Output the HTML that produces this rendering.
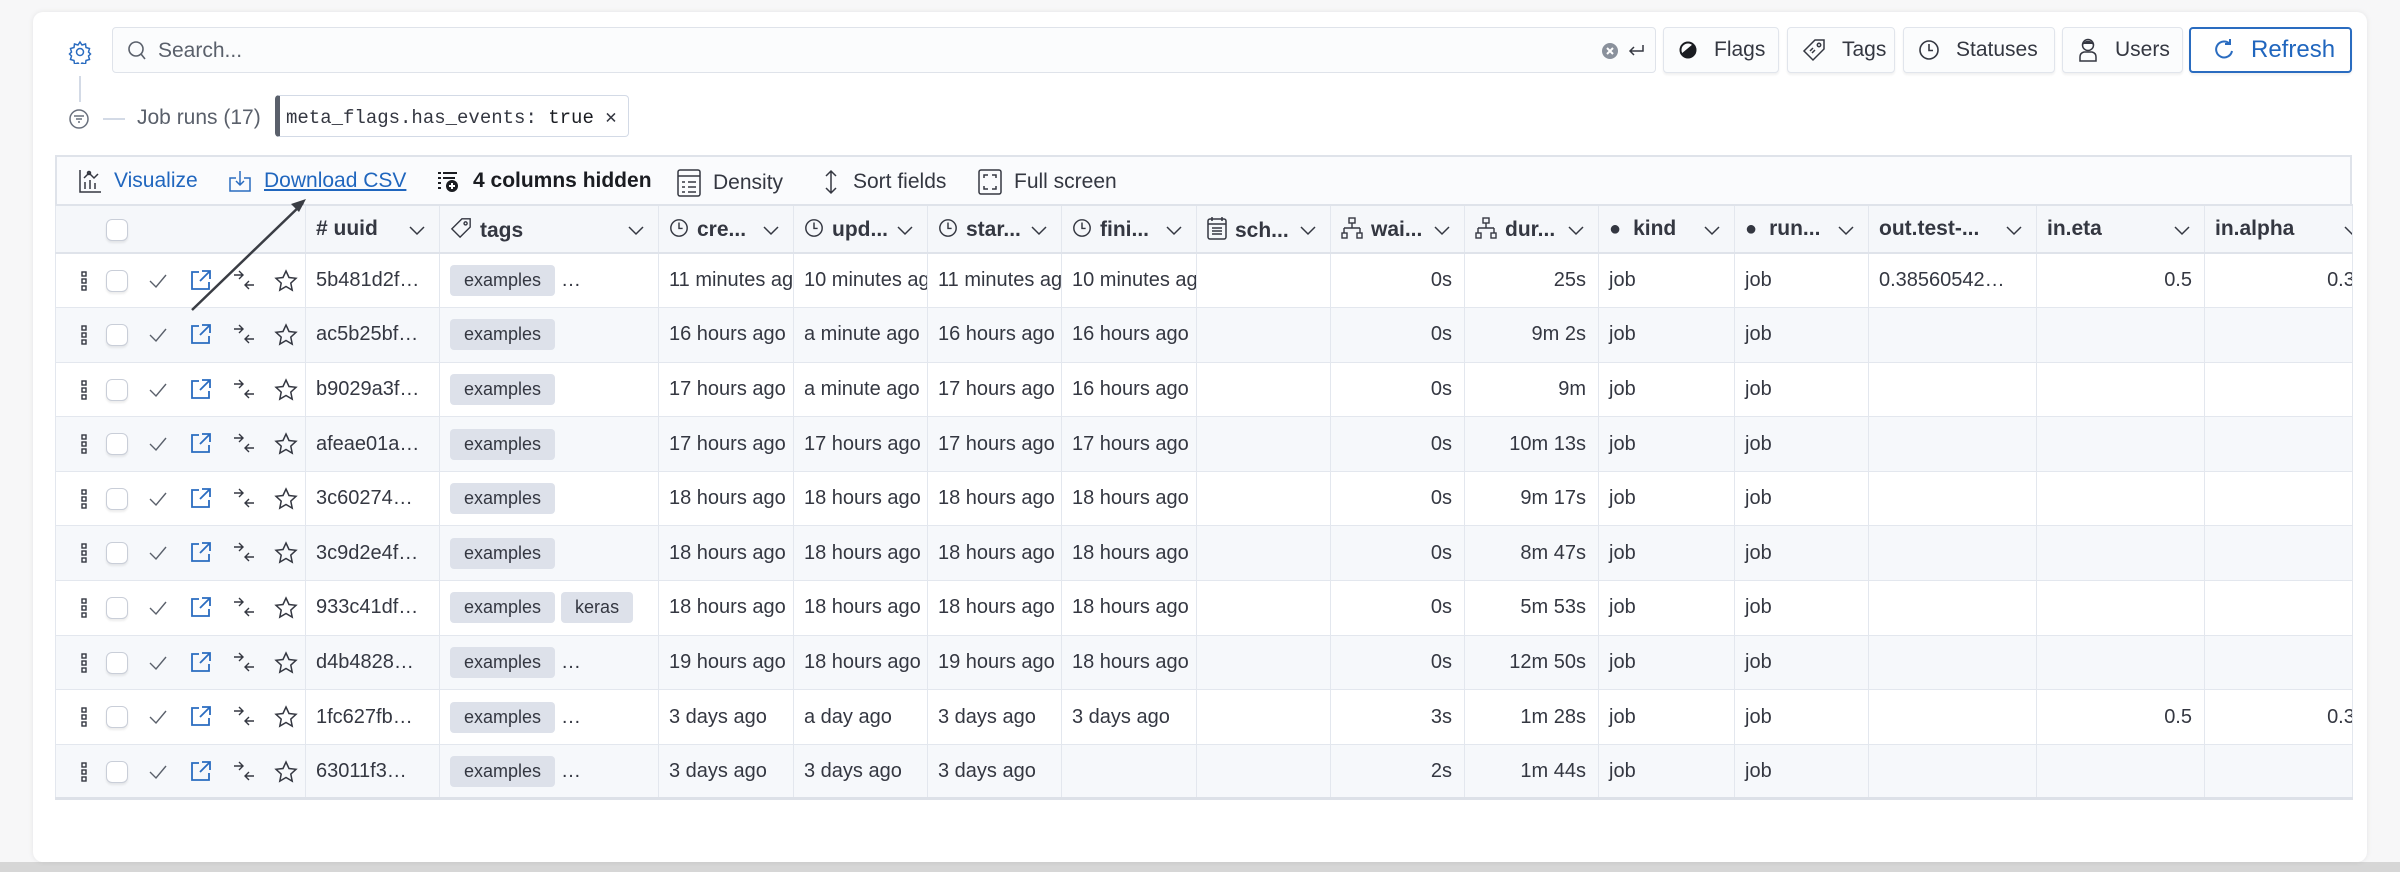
<!DOCTYPE html>
<html><head><meta charset="utf-8"><style>
*{box-sizing:border-box;margin:0;padding:0}
body{width:2400px;height:872px;background:#f7f7f8;font-family:"Liberation Sans",sans-serif;color:#343741;position:relative;overflow:hidden}
.bottom{position:absolute;left:0;top:862px;width:2400px;height:10px;background:#d6d6d6}
.card{position:absolute;left:33px;top:12px;width:2334px;height:850px;background:#fff;border-radius:10px;box-shadow:0 0 6px rgba(0,0,0,.08)}
.abs{position:absolute}
.search{left:112px;top:27px;width:1544px;height:46px;border:1px solid #dfe3ea;border-radius:4px;background:#fbfcfd}
.search span{position:absolute;left:45px;top:11px;font-size:21px;color:#5a606b}
.btn{top:27px;height:46px;border:1px solid #e1e5ec;border-radius:4px;background:#fbfcfd;box-shadow:0 2px 2px rgba(0,0,0,.06);font-size:21px;color:#343741;display:flex;align-items:center;padding-left:14px;gap:16px}
.refresh{border:2px solid #2a6cc0;color:#2066be;background:#fff;font-size:24px}
.chip{left:275px;top:95px;width:354px;height:42px;border:1px solid #d3dae6;border-left:5px solid #5a606b;border-radius:4px;font-family:"Liberation Mono",monospace;font-size:19px;padding:10px 0 0 6px;color:#343741}
.tool{left:55px;top:155px;width:2297px;height:49px;border:2px solid #dfe3ea;border-bottom:none;background:#fafbfd;font-size:21px}
.tool div{position:absolute;top:12px;display:flex;align-items:center;gap:12px}
table{position:absolute;left:55px;top:204px;border-collapse:collapse;table-layout:fixed;width:2297px;font-size:20px}
td,th{border:1px solid #e3e7ee;height:54.6px;overflow:hidden;white-space:nowrap;padding:0 10px;text-align:left}
th{height:48px;background:#f5f7fa;font-weight:bold;font-size:21px;border-top:2px solid #dfe3ea;border-bottom:2px solid #dfe3ea;position:relative}
th .c{position:absolute;right:14px;top:20px}
th .hi{display:inline-block;vertical-align:-3px;margin-right:8px}
tr:nth-child(even) td{background:#f6f8fb}
tbody tr:last-child td{border-bottom:3px solid #dde1e8}
td.r{text-align:right;padding-right:12px}
td.e{text-overflow:ellipsis}
td.a{position:relative;padding:0}
.pill{display:inline-block;background:#dde1ea;border-radius:4px;padding:5px 14px;font-size:18px;margin-right:6px}
.cb{position:absolute;left:50px;top:16px;width:22px;height:22px;border:1px solid #c9ced8;border-radius:6px;background:#fff;box-shadow:0 2px 2px rgba(0,0,0,.08)}
</style></head><body>
<div class="bottom"></div>
<div class="card"></div>

<svg class="abs" style="left:68px;top:40px" width="24" height="24" viewBox="0 0 24 24" fill="none" stroke="#2a6cc0" stroke-width="1.5"><circle cx="12" cy="12" r="3.5"/><path d="M12 2l2 3 3.5-1 .5 3.5 3.5 1-1 3.5 2 2-2 2 1 3.5-3.5 1-.5 3.5-3.5-1-2 3-2-3-3.5 1-.5-3.5-3.5-1 1-3.5-2-2 2-2-1-3.5 3.5-1L6.5 4 10 5z"/></svg>
<div class="abs" style="left:79px;top:76px;width:2px;height:26px;background:#d3dae6"></div>
<svg class="abs" style="left:68px;top:108px" width="22" height="22" viewBox="0 0 22 22" fill="none" stroke="#69707d" stroke-width="1.5"><circle cx="11" cy="11" r="9"/><path d="M6 8h10M8 11h6M10 14h2"/></svg>
<div class="abs" style="left:103px;top:118px;width:22px;height:2px;background:#d3dae6"></div>
<div class="abs" style="left:137px;top:106px;font-size:21px;color:#5a606b">Job runs (17)</div>
<div class="abs chip">meta_flags.has_events: <b style="font-weight:normal;color:#1a1c21">true</b> ✕</div>

<div class="abs search"><svg class="abs" style="left:14px;top:12px" width="20" height="22" viewBox="0 0 20 22" fill="none" stroke="#5a606b" stroke-width="1.6"><circle cx="9" cy="9" r="7"/><path d="M14 14l4 5"/></svg><span>Search...</span>
<svg class="abs" style="left:1488px;top:14px" width="18" height="18" viewBox="0 0 18 18"><circle cx="9" cy="9" r="8" fill="#8a919c"/><path d="M6 6l6 6M12 6l-6 6" stroke="#fff" stroke-width="2"/></svg>
<svg class="abs" style="left:1514px;top:15px" width="18" height="16" viewBox="0 0 18 16" fill="none" stroke="#343741" stroke-width="1.5"><path d="M16 2v6H3M7 4L3 8l4 4"/></svg></div>

<div class="abs btn" style="left:1663px;width:116px"><svg width="20" height="20" viewBox="0 0 20 20"><circle cx="10" cy="10" r="7.5" fill="none" stroke="#1a1c21" stroke-width="2"/><path d="M3 14L15 4A7.5 7.5 0 0 1 10 17.5 7.5 7.5 0 0 1 3 14z" fill="#1a1c21"/></svg>Flags</div>
<div class="abs btn" style="left:1787px;width:108px"><svg width="24" height="24" viewBox="0 0 24 24" fill="none" stroke="#343741" stroke-width="1.5"><path d="M13 2h9v9L11 22 2 13z"/><circle cx="17" cy="7" r="1.7"/><path d="M8 13l3-3M10 15l3-3"/></svg>Tags</div>
<div class="abs btn" style="left:1903px;width:152px"><svg width="22" height="22" viewBox="0 0 22 22" fill="none" stroke="#343741" stroke-width="1.6"><circle cx="11" cy="11" r="9"/><path d="M11 5v6.5h4"/></svg>Statuses</div>
<div class="abs btn" style="left:2062px;width:121px"><svg width="22" height="26" viewBox="0 0 22 26" fill="none" stroke="#343741" stroke-width="1.5"><circle cx="11" cy="8" r="5.5"/><path d="M6 7q5-5 10 0" fill="#343741"/><path d="M3 24v-4q0-4 4-5h8q4 1 4 5v4z"/></svg>Users</div>
<div class="abs btn refresh" style="left:2189px;width:163px;padding-left:22px;gap:16px"><svg width="22" height="24" viewBox="0 0 22 24" fill="none" stroke="#2a6cc0" stroke-width="2"><path d="M17 6A8 8 0 1 0 19 13"/><path d="M17 1v5h-5"/></svg>Refresh</div>

<div class="abs tool">
<div style="left:21px;color:#2066be"><svg width="24" height="24" viewBox="0 0 24 24" fill="none" stroke="#343741" stroke-width="1.5"><path d="M2 1v22h21M7 20v-7M12 20v-9M17 20v-6"/><path d="M6 9l5-5 5 5 4-4"/><circle cx="11" cy="4" r="1.5"/></svg>Visualize</div>
<div style="left:171px;color:#2066be"><svg width="24" height="24" viewBox="0 0 24 24" fill="none" stroke="#2a6cc0" stroke-width="1.5"><path d="M8 9H2v13h20V9h-6M12 2v14M8 12l4 4 4-4"/></svg><span style="text-decoration:underline">Download CSV</span></div>
<div style="left:380px;font-weight:bold;color:#1a1c21"><svg width="24" height="24" viewBox="0 0 24 24" fill="#1a1c21"><rect x="1" y="3" width="3" height="2"/><rect x="6" y="3" width="14" height="2"/><rect x="1" y="8" width="3" height="2"/><rect x="6" y="8" width="12" height="2"/><rect x="1" y="13" width="3" height="2"/><rect x="1" y="18" width="3" height="2"/><circle cx="15" cy="17" r="6"/><path d="M15 14v6M12 17h6" stroke="#fff" stroke-width="2"/></svg>4 columns hidden</div>
<div style="left:620px"><svg width="24" height="28" viewBox="0 0 24 28" fill="none" stroke="#343741" stroke-width="1.5"><rect x="1" y="1" width="22" height="26" rx="2"/><path d="M1 7h22M5 13h3M11 13h8M5 18h3M11 18h8M5 23h3M11 23h8"/></svg>Density</div>
<div style="left:764px"><svg width="20" height="26" viewBox="0 0 20 26" fill="none" stroke="#343741" stroke-width="1.5"><path d="M10 2v22M5 7l5-5 5 5M5 19l5 5 5-5"/></svg>Sort fields</div>
<div style="left:921px"><svg width="24" height="26" viewBox="0 0 24 26" fill="none" stroke="#343741" stroke-width="1.5"><rect x="1" y="1" width="22" height="24" rx="2"/><path d="M6 9V6h4M18 9V6h-4M6 17v3h4M18 17v3h-4"/></svg>Full screen</div>
</div>

<table>
<colgroup><col style="width:250px"><col style="width:134px"><col style="width:219px"><col style="width:135px"><col style="width:134px"><col style="width:134px"><col style="width:135px"><col style="width:134px"><col style="width:134px"><col style="width:134px"><col style="width:136px"><col style="width:134px"><col style="width:168px"><col style="width:168px"><col style="width:148px"></colgroup>
<thead><tr id="hr">
<th style="padding:0"><div class="cb" style="top:13px"></div></th>
<th># uuid</th>
<th><svg class="hi" width="22" height="24" viewBox="0 0 24 24" fill="none" stroke="#343741" stroke-width="1.5"><path d="M13 2h9v9L11 22 2 13z"/><circle cx="17" cy="7" r="1.7"/></svg>tags</th>
<th><svg class="hi" width="20" height="22" viewBox="0 0 22 22" fill="none" stroke="#343741" stroke-width="1.6"><circle cx="11" cy="11" r="9"/><path d="M11 5v6.5h4"/></svg>cre...</th>
<th><svg class="hi" width="20" height="22" viewBox="0 0 22 22" fill="none" stroke="#343741" stroke-width="1.6"><circle cx="11" cy="11" r="9"/><path d="M11 5v6.5h4"/></svg>upd...</th>
<th><svg class="hi" width="20" height="22" viewBox="0 0 22 22" fill="none" stroke="#343741" stroke-width="1.6"><circle cx="11" cy="11" r="9"/><path d="M11 5v6.5h4"/></svg>star...</th>
<th><svg class="hi" width="20" height="22" viewBox="0 0 22 22" fill="none" stroke="#343741" stroke-width="1.6"><circle cx="11" cy="11" r="9"/><path d="M11 5v6.5h4"/></svg>fini...</th>
<th><svg class="hi" width="20" height="24" viewBox="0 0 20 24" fill="none" stroke="#343741" stroke-width="1.5"><rect x="1" y="3" width="18" height="20" rx="2"/><path d="M1 8h18M5 1v4M15 1v4M5 12h10M5 15h10M5 18h10"/></svg>sch...</th>
<th><svg class="hi" width="22" height="22" viewBox="0 0 22 22" fill="none" stroke="#343741" stroke-width="1.4"><rect x="8" y="1" width="6" height="5"/><rect x="1" y="16" width="5" height="5"/><rect x="16" y="16" width="5" height="5"/><path d="M11 6v5M3 11h16M3 11v5M19 11v5"/></svg>wai...</th>
<th><svg class="hi" width="22" height="22" viewBox="0 0 22 22" fill="none" stroke="#343741" stroke-width="1.4"><rect x="8" y="1" width="6" height="5"/><rect x="1" y="16" width="5" height="5"/><rect x="16" y="16" width="5" height="5"/><path d="M11 6v5M3 11h16M3 11v5M19 11v5"/></svg>dur...</th>
<th><span style="font-size:20px;margin-right:12px">●</span>kind</th>
<th><span style="font-size:20px;margin-right:12px">●</span>run...</th>
<th>out.test-...</th>
<th>in.eta</th>
<th>in.alpha</th>
</tr></thead>
<tbody id="tb"></tbody>
</table>

<svg class="abs" style="left:0;top:0" width="2400" height="872"><path d="M192 310L303 203" stroke="#3a3d44" stroke-width="2.5"/><path d="M306 199l-15 5 8 8z" fill="#3a3d44"/></svg>

<script>
var ch='<svg class="c" width="16" height="10" viewBox="0 0 16 10" fill="none" stroke="#343741" stroke-width="1.5"><path d="M1 1l7 7 7-7"/></svg>';
var ths=document.querySelectorAll('#hr th');
for(var j=1;j<ths.length;j++){ths[j].insertAdjacentHTML('beforeend',ch);}
ths[ths.length-1].lastChild.style.right='-8px';
var A='<td class="a"><svg style="position:absolute;left:25px;top:17px" width="6" height="20" viewBox="0 0 6 20" fill="none" stroke="#343741" stroke-width="1.4"><rect x="1" y="1" width="4" height="4"/><rect x="1" y="8" width="4" height="4"/><rect x="1" y="15" width="4" height="4"/></svg><div class="cb"></div><svg style="position:absolute;left:93px;top:19px" width="18" height="16" viewBox="0 0 18 16" fill="none" stroke="#5a606b" stroke-width="1.4"><path d="M1 8l6 6L17 2"/></svg><svg style="position:absolute;left:134px;top:15px" width="22" height="22" viewBox="0 0 22 22" fill="none" stroke="#2a6cc0" stroke-width="1.8"><path d="M9 3H2v17h17v-7M12 2h8v8M20 2L10 12"/></svg><svg style="position:absolute;left:176px;top:15px" width="24" height="24" viewBox="0 0 24 24" fill="none" stroke="#343741" stroke-width="1.4"><path d="M2 6h9M7 2l4 4-4 4M22 16h-9M17 12l-4 4 4 4"/></svg><svg style="position:absolute;left:218px;top:15px" width="24" height="24" viewBox="0 0 24 24" fill="none" stroke="#343741" stroke-width="1.5"><path d="M12 2l3 6.5 7 .8-5.2 4.8 1.4 7-6.2-3.6-6.2 3.6 1.4-7L2 9.3l7-.8z"/></svg></td>';
var R=[
['5b481d2f…','e…','11 minutes ago','10 minutes ago','11 minutes ago','10 minutes ago','','0s','25s','0.38560542…','0.5','0.35'],
['ac5b25bf…','e','16 hours ago','a minute ago','16 hours ago','16 hours ago','','0s','9m 2s','','',''],
['b9029a3f…','e','17 hours ago','a minute ago','17 hours ago','16 hours ago','','0s','9m','','',''],
['afeae01a…','e','17 hours ago','17 hours ago','17 hours ago','17 hours ago','','0s','10m 13s','','',''],
['3c60274…','e','18 hours ago','18 hours ago','18 hours ago','18 hours ago','','0s','9m 17s','','',''],
['3c9d2e4f…','e','18 hours ago','18 hours ago','18 hours ago','18 hours ago','','0s','8m 47s','','',''],
['933c41df…','k','18 hours ago','18 hours ago','18 hours ago','18 hours ago','','0s','5m 53s','','',''],
['d4b4828…','e…','19 hours ago','18 hours ago','19 hours ago','18 hours ago','','0s','12m 50s','','',''],
['1fc627fb…','e…','3 days ago','a day ago','3 days ago','3 days ago','','3s','1m 28s','','0.5','0.35'],
['63011f3…','e…','3 days ago','3 days ago','3 days ago','','','2s','1m 44s','','','']];
var h='';
R.forEach(function(r){
var t='<span class="pill">examples</span>';
if(r[1]=='e…')t+='…';if(r[1]=='k')t+='<span class="pill">keras</span>';
h+='<tr>'+A+'<td class="e">'+r[0]+'</td><td>'+t+'</td>';
for(var i=2;i<7;i++)h+='<td style="padding-right:6px">'+r[i]+'</td>';
h+='<td class="r">'+r[7]+'</td><td class="r">'+r[8]+'</td><td>job</td><td>job</td><td class="e">'+r[9]+'</td><td class="r">'+r[10]+'</td><td class="r" style="padding-right:0"><span style="margin-right:-14px">'+r[11]+'</span></td></tr>';
});
document.getElementById('tb').innerHTML=h;
</script>
</body></html>
